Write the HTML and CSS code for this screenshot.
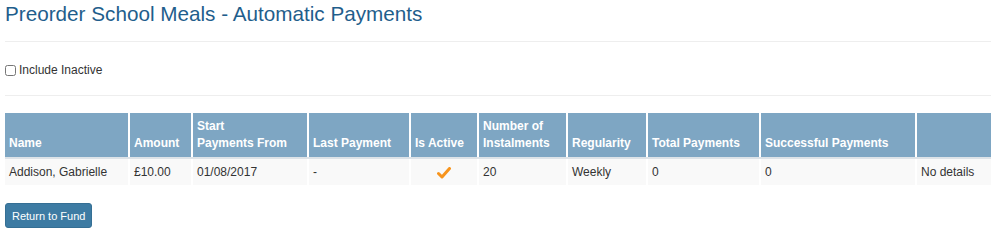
FILE: index.html
```html
<!DOCTYPE html>
<html>
<head>
<meta charset="utf-8">
<link rel="stylesheet" href="styles.css">
</head>
<body>
<div class="page">
  <h2 class="title">Preorder School Meals - Automatic Payments</h2>
  <hr class="rule">
  <label class="check"><input type="checkbox"> Include Inactive</label>
  <hr class="rule">
  <table class="grid">
    <colgroup>
      <col style="width:124px"><col style="width:63px"><col style="width:116px"><col style="width:102px"><col style="width:68px"><col style="width:89px"><col style="width:80px"><col style="width:113px"><col style="width:156px"><col style="width:75px">
    </colgroup>
    <thead>
      <tr>
        <th>Name</th><th>Amount</th><th>Start<br>Payments From</th><th>Last Payment</th><th>Is Active</th><th>Number of<br>Instalments</th><th>Regularity</th><th>Total Payments</th><th>Successful Payments</th><th></th>
      </tr>
    </thead>
    <tbody>
      <tr>
        <td>Addison, Gabrielle</td><td>£10.00</td><td>01/08/2017</td><td>-</td>
        <td class="center"><svg class="tick" width="14" height="12" viewBox="0 0 14 12"><path d="M1.5 6.5 L5 10 L12.5 1.5" fill="none" stroke="#f7941d" stroke-width="3" stroke-linecap="round" stroke-linejoin="round"/></svg></td>
        <td>20</td><td>Weekly</td><td>0</td><td>0</td><td>No details</td>
      </tr>
    </tbody>
  </table>
  <button class="btn">Return to Fund</button>
</div>
</body>
</html>
```
FILE: styles.css
```css
html, body { margin: 0; padding: 0; background: #fff; }
body { font-family: "Liberation Sans", Arial, sans-serif; font-size: 12px; color: #333; }
.page { padding: 0 9px 0 5px; }
.title { margin: 0; padding-top: 2px; font-size: 20.7px; font-weight: normal; color: #1f5e8c; line-height: 24px; }
.rule { border: 0; border-top: 1px solid #eee; margin: 15px 0 0 0; }
.rule + .check { margin-top: 21px; }
.check { display: flex; align-items: center; gap: 3px; font-size: 12px; color: #333; height: 14px; margin-bottom: 18px; }
.check input { margin: 0; width: 11px; height: 11px; }
.check + .rule { margin-top: 0; margin-bottom: 17px; }
.grid { border-collapse: collapse; table-layout: fixed; width: 986px; }
.grid th { background: #7ea6c3; color: #fff; font-weight: bold; text-align: left; vertical-align: bottom; padding: 4px 4px 5px 4px; line-height: 17px; border-left: 2px solid #fff; border-bottom: 2px solid #dde3e8; height: 35px; }
.grid th:first-child { border-left: 0; }
.grid td { background: #f9f9f9; padding: 5px 4px 4px 4px; line-height: 17px; border-left: 2px solid #fff; height: 17px; }
.grid td:first-child { border-left: 0; }
.grid td.center { text-align: center; }
.tick { vertical-align: middle; }
.btn { margin-top: 18px; background: #3d7ba3; color: #fff; border: 1px solid #356f94; border-radius: 3px; font-family: "Liberation Sans", Arial, sans-serif; font-size: 11px; padding: 0 6px; height: 25px; width: 87px; white-space: nowrap; }
```
